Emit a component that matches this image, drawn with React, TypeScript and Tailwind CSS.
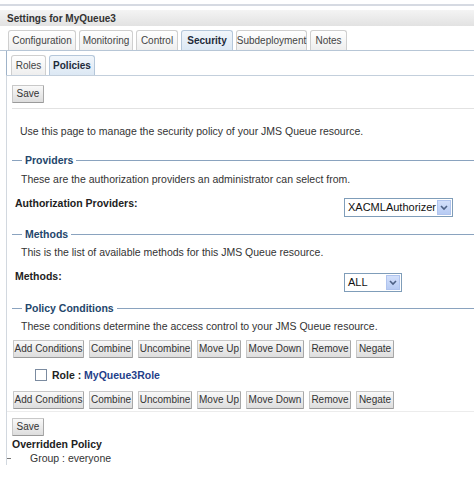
import React from 'react';

const font = { fontFamily: '"Liberation Sans", Arial, sans-serif' };

function Tab({ label, active, w }: { label: string; active?: boolean; w: string }) {
  return (
    <div
      className={
        'h-[20px] flex items-center justify-center border border-b-0 rounded-t-[3px] text-[10px] whitespace-nowrap ' +
        w +
        (active
          ? ' bg-gradient-to-b from-[#f1f6fb] to-[#dce8f4] border-[#b5c7da] font-bold text-[#1d2a3a]'
          : ' bg-gradient-to-b from-white to-[#eeeeee] border-[#cfcfcf] text-[#444]')
      }
    >
      {label}
    </div>
  );
}

function Btn({ label, w }: { label: string; w: string }) {
  return (
    <button
      className={
        'h-[18px] flex items-center justify-center whitespace-nowrap border border-[#c8c8c8] border-b-[#9a9a9a] border-r-[#a8a8a8] bg-gradient-to-b from-[#f9f9f9] to-[#dddddd] text-[10px] text-[#333] leading-none rounded-[1px] ' +
        w
      }
    >
      {label}
    </button>
  );
}

function Section({ title }: { title: string }) {
  return (
    <div className="flex items-center gap-[3px] pl-[5px] h-[14px]">
      <div className="w-[10px] h-px bg-[#8aa3bf]" />
      <span className="font-bold text-[10.5px] leading-[14px] text-[#24466b]">{title}</span>
      <div className="flex-1 h-px bg-[#8aa3bf]" />
    </div>
  );
}

function Select({ value, width }: { value: string; width: string }) {
  return (
    <div className={'h-[19px] border border-[#7f9db9] bg-white flex items-center justify-between ' + width}>
      <span className="pl-[3px] text-[11px] leading-none text-[#111] whitespace-nowrap">{value}</span>
      <div className="w-[14px] h-[15px] mr-[1px] bg-gradient-to-b from-[#d3e0fb] to-[#b7cbf3] border border-[#b0c4ee] flex items-center justify-center">
        <svg width="8" height="6" viewBox="0 0 8 6">
          <path d="M1 1 L4 4 L7 1" stroke="#4d6185" strokeWidth="1.6" fill="none" />
        </svg>
      </div>
    </div>
  );
}

const actions = [
  { label: 'Add Conditions', w: 'w-[71px]' },
  { label: 'Combine', w: 'w-[44px]' },
  { label: 'Uncombine', w: 'w-[54px]' },
  { label: 'Move Up', w: 'w-[44px]' },
  { label: 'Move Down', w: 'w-[58px]' },
  { label: 'Remove', w: 'w-[42px]' },
  { label: 'Negate', w: 'w-[38px]' },
];

const tabs = [
  { label: 'Configuration', w: 'w-[68px]' },
  { label: 'Monitoring', w: 'w-[54px]' },
  { label: 'Control', w: 'w-[42px]' },
  { label: 'Security', w: 'w-[52px]' },
  { label: 'Subdeployment', w: 'w-[71px]' },
  { label: 'Notes', w: 'w-[37px]' },
];

export default function App() {
  return (
    <div className="w-[474px] h-[477px] bg-white overflow-hidden text-[10.5px] text-[#333]" style={font}>
      <div className="h-[4px]" />
      <div className="h-[2px] bg-[#d6dae2]" />
      <div className="h-[4px]" />

      {/* header */}
      <div className="h-[16px] bg-gradient-to-b from-[#f4f4f4] to-[#e2e2e2] flex items-center pl-[7px]">
        <span className="font-bold text-[10px] text-[#333]">Settings for MyQueue3</span>
      </div>

      {/* tabs */}
      <div className="flex items-end gap-[3px] pl-[8px] pt-[4px]">
        {tabs.map(t => (
          <Tab key={t.label} label={t.label} w={t.w} active={t.label === 'Security'} />
        ))}
      </div>
      <div className="h-px bg-[#b7c6d6]" />

      <div className="ml-[6px] border-l border-[#d2d8df]">
        {/* subtabs */}
        <div className="flex items-end gap-[3px] pl-[4px] pt-[4px] border-l border-[#9fb3c9] -ml-px">
          <Tab label="Roles" w="w-[35px]" />
          <Tab label="Policies" w="w-[46px]" active />
        </div>
        <div className="h-px bg-[#c3cfdc] -ml-px" />

        <div className="pl-[5px] pt-[9px] pb-[5px]">
          <Btn label="Save" w="w-[32px]" />
        </div>
        <div className="h-px bg-[#e2e2e2] ml-[5px]" />

        <p className="pl-[13px] pt-[15px] leading-[14px]">
          Use this page to manage the security policy of your JMS Queue resource.
        </p>

        <div className="pt-[15px]">
          <Section title="Providers" />
        </div>
        <p className="pl-[14px] pt-[5px] leading-[14px]">
          These are the authorization providers an administrator can select from.
        </p>
        <div className="flex items-start justify-between pl-[8px] pr-[21px] pt-[10px]">
          <span className="font-bold text-[10.5px] leading-[14px] text-[#222]">Authorization Providers:</span>
          <div className="pt-[2px]">
            <Select value="XACMLAuthorizer" width="w-[109px]" />
          </div>
        </div>

        <div className="pt-[10px]">
          <Section title="Methods" />
        </div>
        <p className="pl-[14px] pt-[4px] leading-[14px]">
          This is the list of available methods for this JMS Queue resource.
        </p>
        <div className="flex items-start pl-[8px] pt-[10px]">
          <span className="font-bold text-[10.5px] leading-[14px] text-[#222] w-[329px]">Methods:</span>
          <div className="pt-[4px]">
            <Select value="ALL" width="w-[58px]" />
          </div>
        </div>

        <div className="pt-[9px]">
          <Section title="Policy Conditions" />
        </div>
        <p className="pl-[14px] pt-[4px] leading-[14px]">
          These conditions determine the access control to your JMS Queue resource.
        </p>
        <div className="flex gap-[5px] pl-[6px] pt-[7px]">
          {actions.map(a => <Btn key={a.label} label={a.label} w={a.w} />)}
        </div>

        <div className="flex items-center pl-[28px] pt-[10px] gap-[5px] h-[24px]">
          <div className="w-[12px] h-[12px] border border-[#7b8ba0] bg-white" />
          <span className="font-bold text-[10.5px] leading-[14px] text-[#222]">
            Role : <span className="text-[#1f3f8a]">MyQueue3Role</span>
          </span>
        </div>

        <div className="flex gap-[5px] pl-[6px] pt-[9px] pb-[2px] border-b border-[#ececec]">
          {actions.map(a => <Btn key={a.label} label={a.label} w={a.w} />)}
        </div>

        <div className="pl-[5px] pt-[6px]">
          <Btn label="Save" w="w-[32px]" />
        </div>
        <div className="pl-[5px] pt-[1px] font-bold text-[10.5px] leading-[14px] text-[#222]">Overridden Policy</div>
        <div className="flex items-center h-[14px]">
          <div className="w-[4px] h-px bg-[#777]" />
          <span className="pl-[19px] leading-[14px]">Group : everyone</span>
        </div>
      </div>
    </div>
  );
}
